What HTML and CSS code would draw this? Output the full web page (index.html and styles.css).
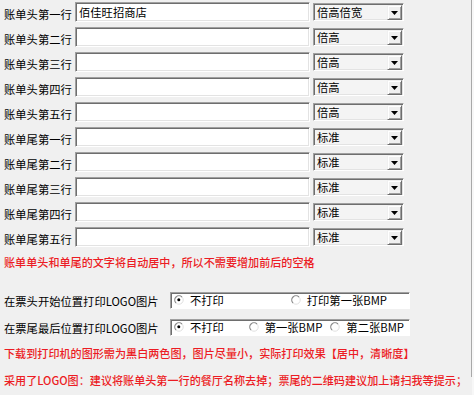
FILE: index.html
```html
<!DOCTYPE html>
<html lang="zh-CN">
<head>
<meta charset="utf-8">
<title>账单设置</title>
<link rel="stylesheet" href="styles.css">
</head>
<body>
<div class="page">
  <div class="rows">
    <div class="row"><span class="label">账单头第一行</span><div class="input">佰佳旺招商店</div><div class="combo"><span class="val">倍高倍宽</span><span class="btn"><svg width="7" height="4" viewBox="0 0 7 4"><path d="M0 0H7L3.5 4Z" fill="#000"/></svg></span></div></div>
    <div class="row"><span class="label">账单头第二行</span><div class="input"></div><div class="combo"><span class="val">倍高</span><span class="btn"><svg width="7" height="4" viewBox="0 0 7 4"><path d="M0 0H7L3.5 4Z" fill="#000"/></svg></span></div></div>
    <div class="row"><span class="label">账单头第三行</span><div class="input"></div><div class="combo"><span class="val">倍高</span><span class="btn"><svg width="7" height="4" viewBox="0 0 7 4"><path d="M0 0H7L3.5 4Z" fill="#000"/></svg></span></div></div>
    <div class="row"><span class="label">账单头第四行</span><div class="input"></div><div class="combo"><span class="val">倍高</span><span class="btn"><svg width="7" height="4" viewBox="0 0 7 4"><path d="M0 0H7L3.5 4Z" fill="#000"/></svg></span></div></div>
    <div class="row"><span class="label">账单头第五行</span><div class="input"></div><div class="combo"><span class="val">倍高</span><span class="btn"><svg width="7" height="4" viewBox="0 0 7 4"><path d="M0 0H7L3.5 4Z" fill="#000"/></svg></span></div></div>
    <div class="row"><span class="label">账单尾第一行</span><div class="input"></div><div class="combo"><span class="val">标准</span><span class="btn"><svg width="7" height="4" viewBox="0 0 7 4"><path d="M0 0H7L3.5 4Z" fill="#000"/></svg></span></div></div>
    <div class="row"><span class="label">账单尾第二行</span><div class="input"></div><div class="combo"><span class="val">标准</span><span class="btn"><svg width="7" height="4" viewBox="0 0 7 4"><path d="M0 0H7L3.5 4Z" fill="#000"/></svg></span></div></div>
    <div class="row"><span class="label">账单尾第三行</span><div class="input"></div><div class="combo"><span class="val">标准</span><span class="btn"><svg width="7" height="4" viewBox="0 0 7 4"><path d="M0 0H7L3.5 4Z" fill="#000"/></svg></span></div></div>
    <div class="row"><span class="label">账单尾第四行</span><div class="input"></div><div class="combo"><span class="val">标准</span><span class="btn"><svg width="7" height="4" viewBox="0 0 7 4"><path d="M0 0H7L3.5 4Z" fill="#000"/></svg></span></div></div>
    <div class="row"><span class="label">账单尾第五行</span><div class="input"></div><div class="combo"><span class="val">标准</span><span class="btn"><svg width="7" height="4" viewBox="0 0 7 4"><path d="M0 0H7L3.5 4Z" fill="#000"/></svg></span></div></div>
  </div>

  <p class="note n1">账单单头和单尾的文字将自动居中，所以不需要增加前后的空格</p>

  <div class="logo-row first">
    <span class="label2">在票头开始位置打印LOGO图片</span>
    <div class="group g1">
      <span class="radio"><svg class="rb" width="10" height="10" viewBox="0 0 10 10"><circle cx="5" cy="5" r="4.2" fill="#fff" stroke="#e0e0e0"/><path d="M2 8A4.2 4.2 0 0 1 8 2" stroke="#8a8a8a" fill="none" stroke-width="1.1"/><circle cx="4.8" cy="4.8" r="1.5" fill="#000"/></svg>不打印</span>
      <span class="radio push"><svg class="rb" width="10" height="10" viewBox="0 0 10 10"><circle cx="5" cy="5" r="4.2" fill="#fff" stroke="#e0e0e0"/><path d="M2 8A4.2 4.2 0 0 1 8 2" stroke="#8a8a8a" fill="none" stroke-width="1.1"/></svg>打印第一张BMP</span>
    </div>
  </div>

  <div class="logo-row second">
    <span class="label2">在票尾最后位置打印LOGO图片</span>
    <div class="group g2">
      <span class="radio"><svg class="rb" width="10" height="10" viewBox="0 0 10 10"><circle cx="5" cy="5" r="4.2" fill="#fff" stroke="#e0e0e0"/><path d="M2 8A4.2 4.2 0 0 1 8 2" stroke="#8a8a8a" fill="none" stroke-width="1.1"/><circle cx="4.8" cy="4.8" r="1.5" fill="#000"/></svg>不打印</span>
      <span class="radio push"><svg class="rb" width="10" height="10" viewBox="0 0 10 10"><circle cx="5" cy="5" r="4.2" fill="#fff" stroke="#e0e0e0"/><path d="M2 8A4.2 4.2 0 0 1 8 2" stroke="#8a8a8a" fill="none" stroke-width="1.1"/></svg>第一张BMP</span>
      <span class="radio"><svg class="rb" width="10" height="10" viewBox="0 0 10 10"><circle cx="5" cy="5" r="4.2" fill="#fff" stroke="#e0e0e0"/><path d="M2 8A4.2 4.2 0 0 1 8 2" stroke="#8a8a8a" fill="none" stroke-width="1.1"/></svg>第二张BMP</span>
    </div>
  </div>

  <p class="note n2">下载到打印机的图形需为黑白两色图，图片尽量小，实际打印效果【居中，清晰度】</p>
  <p class="note n3">采用了LOGO图：建议将账单头第一行的餐厅名称去掉；票尾的二维码建议加上请扫我等提示；</p>
</div>
</body>
</html>
```

FILE: styles.css
```css
html, body {
  margin: 0;
  padding: 0;
}
body {
  background: #f7f7f7;
  font-family: "Noto Sans CJK SC", "Noto Sans", sans-serif;
  font-size: 11.3px;
  color: #000;
  overflow: hidden;
}
.page {
  position: relative;
  width: 472px;
  height: 395px;
  background: #f0f0f0;
  padding-top: 2px;
  box-sizing: border-box;
}
.page::after {
  content: "";
  position: absolute;
  right: 0;
  top: 0;
  width: 1px;
  height: 377px;
  background: #a8a8a8;
}
.rows {
  display: flex;
  flex-direction: column;
  gap: 5px;
}
.row {
  display: flex;
  align-items: flex-start;
  height: 20px;
}
.label {
  width: 71px;
  padding-left: 4px;
  padding-top: 2px;
  line-height: 20px;
  white-space: nowrap;
}
.input {
  width: 235px;
  height: 20px;
  box-sizing: border-box;
  background: #fff;
  border: 1px solid;
  border-color: #a0a0a0 #fff #fff #a0a0a0;
  box-shadow: inset 1px 1px 0 #6e6e6e, inset -1px -1px 0 #e3e3e3;
  padding-left: 3px;
  line-height: 18px;
  font-size: 11.3px;
  color: #000;
}
.combo {
  margin-left: 3px;
  margin-top: 1px;
  width: 91px;
  height: 18px;
  box-sizing: border-box;
  display: flex;
  background: #f4f4f4;
  border: 1px solid;
  border-color: #a0a0a0 #fff #fff #a0a0a0;
  box-shadow: inset 1px 1px 0 #6e6e6e, inset -1px -1px 0 #e3e3e3;
  padding: 1px;
}
.val {
  flex: 1;
  padding-left: 2px;
  line-height: 15px;
  font-size: 11.3px;
  color: #000;
}
.btn {
  width: 15px;
  height: 15px;
  box-sizing: border-box;
  display: flex;
  align-items: center;
  justify-content: center;
  background: #f0f0f0;
  border: 1px solid;
  border-color: #f0f0f0 #6e6e6e #6e6e6e #f0f0f0;
  box-shadow: inset 1px 1px 0 #fff, inset -1px -1px 0 #a0a0a0;
}
.note {
  margin: 0;
  padding-left: 4px;
  line-height: 14px;
  font-size: 11.1px;
  font-weight: 500;
  color: #ec1c24;
  white-space: nowrap;
}
.n1 { margin-top: 8px; }
.n2 { margin-top: 10px; }
.n3 { margin-top: 13px; }
.logo-row {
  display: flex;
  align-items: flex-start;
  height: 17px;
}
.logo-row.first { margin-top: 23px; }
.logo-row.second { margin-top: 10px; }
.label2 {
  width: 166px;
  padding-left: 4px;
  padding-top: 1px;
  line-height: 16px;
  white-space: nowrap;
}
.group {
  width: 240px;
  height: 17px;
  box-sizing: border-box;
  background: #fff;
  border: 1px solid;
  border-color: #a0a0a0 #fff #fff #a0a0a0;
  box-shadow: inset 1px 1px 0 #6e6e6e;
  display: flex;
  align-items: center;
  padding-left: 3px;
}
.g1 { padding-right: 22px; }
.g2 { padding-right: 5px; gap: 8px; }
.radio {
  display: flex;
  align-items: center;
  gap: 6px;
  line-height: 15px;
  font-size: 11.3px;
  color: #000;
  white-space: nowrap;
}
.radio .rb {
  margin-top: -2px;
}
.push { margin-left: auto; }
```
